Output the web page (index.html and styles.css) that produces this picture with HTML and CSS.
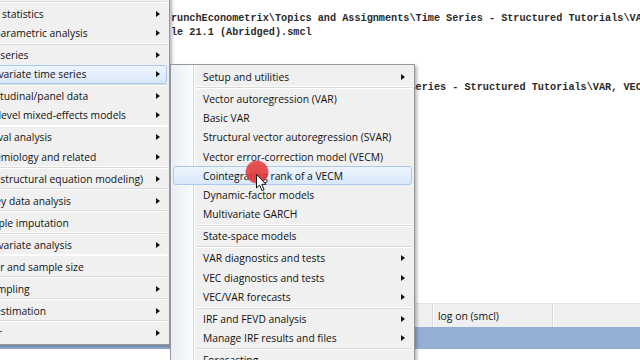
FILE: index.html
```html
<!DOCTYPE html>
<html lang="en">
<head>
  <meta charset="UTF-8" />
  <title>Stata - Multivariate time series</title>
  <link rel="stylesheet" href="styles.css">
</head>
<body>
  <div class="stata">
    <div class="results">
<pre class="log">runchEconometrix\Topics and Assignments\Time Series - Structured Tutorials\VAR, VECM and Granger Causality
le 21.1 (Abridged).smcl



conometrix\Topics and Assignments\Time Series - Structured Tutorials\VAR, VECM and Granger Causality</pre>
    </div>
    <div class="status">
      <span class="pane pane-lead"></span>
      <span class="pane pane-log">log on (smcl)</span>
      <span class="pane pane-rest"></span>
    </div>
    <div class="taskbar"></div>
  </div>

  <!-- Statistics menu, its left part runs off the screen -->
  <ul class="menu menu-stats">
    <li class="item">Sample-selection models</li>
    <li class="sep"></li>
    <li class="item sub">Exact statistics</li>
    <li class="item sub">Nonparametric analysis</li>
    <li class="sep"></li>
    <li class="item sub">Time series</li>
    <li class="item sub active">Multivariate time series</li>
    <li class="sep"></li>
    <li class="item sub">Longitudinal/panel data</li>
    <li class="item sub">Multilevel mixed-effects models</li>
    <li class="sep"></li>
    <li class="item sub">Survival analysis</li>
    <li class="item sub">Epidemiology and related</li>
    <li class="sep"></li>
    <li class="item sub">SEM (structural equation modeling)</li>
    <li class="sep"></li>
    <li class="item sub">Survey data analysis</li>
    <li class="sep"></li>
    <li class="item">Multiple imputation</li>
    <li class="sep"></li>
    <li class="item sub">Multivariate analysis</li>
    <li class="sep"></li>
    <li class="item">Power and sample size</li>
    <li class="sep"></li>
    <li class="item sub">Resampling</li>
    <li class="sep"></li>
    <li class="item sub">Postestimation</li>
    <li class="sep"></li>
    <li class="item sub">Other</li>
  </ul>

  <!-- Multivariate time series submenu -->
  <ul class="menu menu-mvts">
    <li class="item sub">Setup and utilities</li>
    <li class="sep"></li>
    <li class="item">Vector autoregression (VAR)</li>
    <li class="item">Basic VAR</li>
    <li class="item">Structural vector autoregression (SVAR)</li>
    <li class="item">Vector error-correction model (VECM)</li>
    <li class="item active">Cointegrating rank of a VECM</li>
    <li class="item">Dynamic-factor models</li>
    <li class="item">Multivariate GARCH</li>
    <li class="sep"></li>
    <li class="item">State-space models</li>
    <li class="sep"></li>
    <li class="item sub">VAR diagnostics and tests</li>
    <li class="item sub">VEC diagnostics and tests</li>
    <li class="item sub">VEC/VAR forecasts</li>
    <li class="sep"></li>
    <li class="item sub">IRF and FEVD analysis</li>
    <li class="item sub">Manage IRF results and files</li>
    <li class="sep"></li>
    <li class="item">Forecasting</li>
  </ul>

  <div class="click"></div>
  <svg class="pointer" width="12" height="18" viewBox="0 0 12 18">
    <path d="M0.5 0.5 L0.5 14 L3.6 11 L6 16.6 L8.1 15.7 L5.8 10.3 L10 10.3 Z" fill="#fff" stroke="#111" stroke-width="1" stroke-linejoin="round"/>
  </svg>
</body>
</html>
```

FILE: styles.css
```css
html, body {
  margin: 0;
  padding: 0;
}
body {
  width: 640px;
  height: 360px;
  overflow: hidden;
  position: relative;
  background: #fff;
  font-family: 'Open Sans', 'Noto Sans', sans-serif;
  color: #111;
}

/* main window */
.stata {
  display: flex;
  flex-direction: column;
  height: 360px;
}
.results {
  height: 303px;
  overflow: hidden;
}
.log {
  margin: 0;
  padding: 12px 0 0 171px;
  font-family: 'Liberation Mono', monospace;
  font-weight: bold;
  font-size: 10.2px;
  line-height: 13.7px;
  color: #2b2b2b;
  white-space: pre;
}
.status {
  height: 24px;
  display: flex;
  background: #efefef;
  border-top: 1px solid #e2e2e2;
  box-sizing: border-box;
}
.pane {
  display: flex;
  align-items: center;
  border-left: 1px solid #d6d6d6;
  box-shadow: inset 1px 0 #fff;
  font-size: 10.4px;
  padding-left: 5px;
}
.pane-lead {
  width: 432px;
  border-left: none;
  padding-left: 0;
}
.pane-log {
  width: 114px;
}
.pane-rest {
  flex: 1;
}
.taskbar {
  height: 22px;
  background: #94afd3;
}

/* menus */
.menu {
  position: absolute;
  margin: 0;
  padding: 2px;
  list-style: none;
  border: 1px solid #979797;
  box-shadow: 2px 2px 3px rgba(40, 50, 70, 0.35);
  background:
    linear-gradient(to right, #eaeef5 0, #f9fafc 22px, #d9dadb 22px, #d9dadb 23px, #fff 23px, #fff 24px, #f0f0f0 24px);
  font-size: 10.3px;
}
.menu-stats {
  left: -59px;
  top: -21px;
  width: 223px;
}
.menu-mvts {
  left: 170px;
  top: 64px;
  width: 239px;
}
.item {
  height: 19.3px;
  box-sizing: border-box;
  display: flex;
  align-items: center;
  padding: 0 6px 0 29px;
  border: 1px solid transparent;
  border-radius: 3px;
  white-space: nowrap;
}
.item.sub::after {
  content: '';
  margin-left: auto;
  border-left: 4px solid #111;
  border-top: 3.5px solid transparent;
  border-bottom: 3.5px solid transparent;
}
.item.active {
  border-color: #a9c9ee;
  background: linear-gradient(#eef5fd, #d8e8fb);
}
.sep {
  height: 2.7px;
  margin-left: 24px;
  background: linear-gradient(#fff 0, #fff 0.5px, #d9d9d9 0.5px, #d9d9d9 1.5px, #fff 1.5px, #fff 2.5px, transparent 2.5px);
}
.menu-stats .sep {
  margin-left: 0;
}

/* click marker and mouse pointer */
.click {
  position: absolute;
  left: 245px;
  top: 160px;
  width: 24px;
  height: 24px;
  border-radius: 50%;
  background: radial-gradient(circle, rgba(228, 48, 48, 0.88) 0, rgba(228, 48, 48, 0.82) 62%, rgba(228, 48, 48, 0) 72%);
}
.pointer {
  position: absolute;
  left: 256px;
  top: 174px;
}
```
